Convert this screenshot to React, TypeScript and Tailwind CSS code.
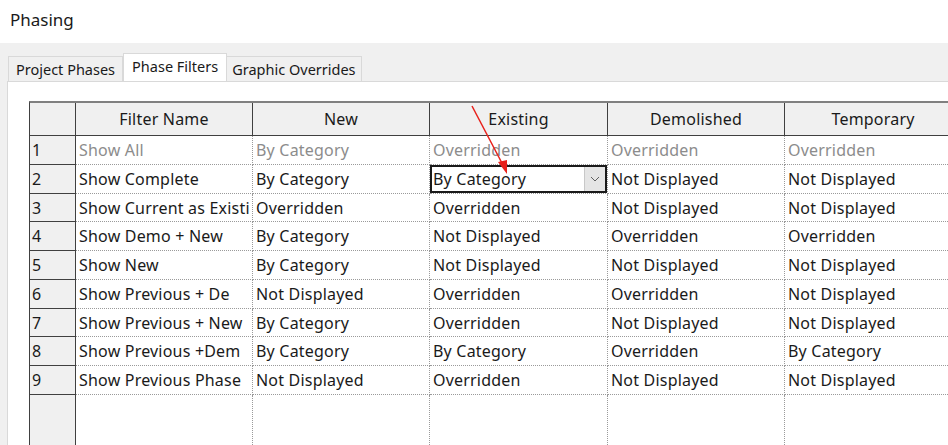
import React from 'react';

// Column widths of the phase filter grid, in px
const COLS = [46, 177, 177, 178, 177, 177];
const HEADERS = ['', 'Filter Name', 'New', 'Existing', 'Demolished', 'Temporary'];

// Names are shown as the grid clips them
const ROWS: string[][] = [
  ['Show All', 'By Category', 'Overridden', 'Overridden', 'Overridden'],
  ['Show Complete', 'By Category', 'By Category', 'Not Displayed', 'Not Displayed'],
  ['Show Current as Existi', 'Overridden', 'Overridden', 'Not Displayed', 'Not Displayed'],
  ['Show Demo + New', 'By Category', 'Not Displayed', 'Overridden', 'Overridden'],
  ['Show New', 'By Category', 'Not Displayed', 'Not Displayed', 'Not Displayed'],
  ['Show Previous + De', 'Not Displayed', 'Overridden', 'Overridden', 'Not Displayed'],
  ['Show Previous + New', 'By Category', 'Overridden', 'Not Displayed', 'Not Displayed'],
  ['Show Previous +Dem', 'By Category', 'By Category', 'Overridden', 'By Category'],
  ['Show Previous Phase', 'Not Displayed', 'Overridden', 'Not Displayed', 'Not Displayed'],
];

const Dropdown: React.FC<{ value: string }> = ({ value }) => (
  <div className="flex h-full w-full border-2 border-[#1a1a1a] bg-white">
    <span className="flex-1 pl-[1px] leading-[24px] whitespace-nowrap">{value}</span>
    <span className="flex w-[21px] items-center justify-center border-l border-[#c8c8c8] bg-[#e5e5e5]">
      <svg width="10" height="6" viewBox="0 0 10 6">
        <path d="M1 1 L5 5 L9 1" fill="none" stroke="#606060" strokeWidth="1" />
      </svg>
    </span>
  </div>
);

const App: React.FC = () => {
  return (
    <div className="flex h-[445px] w-[948px] flex-col overflow-hidden bg-white text-[#1a1a1a] font-['Noto_Sans',sans-serif]">
      <div className="h-[43px] shrink-0 pl-[10px] pt-[7px] text-[17px]">Phasing</div>

      <div className="flex flex-1 flex-col bg-[#f0f0f0] pt-[10px]">
        {/* Tabs */}
        <div className="flex h-[28px] items-end pl-[8px] text-[14.5px]">
          <div className="h-[25px] border border-b-0 border-[#d9d9d9] bg-[#f0f0f0] px-[7px] leading-[24px]">Project Phases</div>
          <div className="h-[28px] border border-b-0 border-[#d9d9d9] bg-white px-[8px] leading-[24px]">Phase Filters</div>
          <div className="h-[25px] border border-b-0 border-l-0 border-[#d9d9d9] bg-[#f0f0f0] px-[5px] leading-[24px]">Graphic Overrides</div>
        </div>

        {/* Panel */}
        <div className="ml-[7px] flex-1 border-l border-t border-[#d9d9d9] bg-white pl-[21px] pt-[19px]">
          <div className="relative text-[16px] tracking-[0.2px]">
            {/* Header */}
            <div className="flex border-t-2 border-l border-[#808080] border-l-[#404040]">
              {HEADERS.map((h, i) => (
                <div
                  key={i}
                  style={{ width: COLS[i] }}
                  className="h-[33px] shrink-0 border-r border-b border-[#404040] bg-[#f0f0f0] text-center leading-[32px]"
                >
                  {h}
                </div>
              ))}
            </div>

            {/* Body rows */}
            {ROWS.map((row, r) => (
              <div key={r} className="flex border-l border-[#404040]">
                <div
                  style={{ width: COLS[0] }}
                  className="h-[28.75px] shrink-0 border-r border-b border-[#404040] bg-[#f0f0f0] pl-[2px] leading-[28.5px]"
                >
                  {r + 1}
                </div>
                {row.map((cell, c) => (
                  <div
                    key={c}
                    style={{ width: COLS[c + 1] }}
                    className={`h-[28.75px] shrink-0 whitespace-nowrap border-r border-b border-dotted border-[#9a9a9a] leading-[28.5px] ${
                      r === 0 ? 'text-[#8c8c8c]' : ''
                    } ${r === 1 && c === 2 ? '' : 'pl-[3px]'}`}
                  >
                    {r === 1 && c === 2 ? <Dropdown value={cell} /> : cell}
                  </div>
                ))}
              </div>
            ))}

            {/* Empty area below the last row */}
            <div className="flex h-[60px] border-l border-[#404040]">
              <div style={{ width: COLS[0] }} className="shrink-0 border-r border-[#404040] bg-[#f0f0f0]" />
              {COLS.slice(1).map((w, i) => (
                <div key={i} style={{ width: w }} className="shrink-0 border-r border-dotted border-[#9a9a9a]" />
              ))}
            </div>

            {/* Red annotation arrow */}
            <svg className="pointer-events-none absolute left-0 top-0" width="600" height="120">
              <line x1="443" y1="5" x2="475" y2="66" stroke="#e8201a" strokeWidth="1.5" />
              <path d="M478 73 L469 61 L478 59 Z" fill="#e8201a" />
            </svg>
          </div>
        </div>
      </div>
    </div>
  );
};

export default App;
